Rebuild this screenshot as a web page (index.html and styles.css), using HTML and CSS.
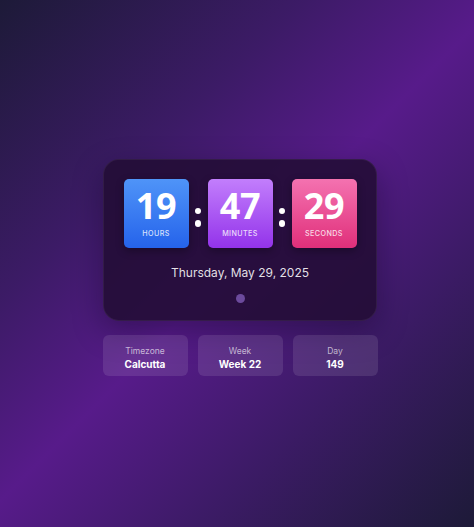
FILE: index.html
```html
<!DOCTYPE html>
<html lang="en">
<head>
<meta charset="utf-8">
<title>Clock</title>
<link rel="stylesheet" href="styles.css">
</head>
<body>
<main class="page">
  <section class="card">
    <div class="clock">
      <div class="tile tile-blue">
        <span class="num">19</span>
        <span class="unit">HOURS</span>
      </div>
      <div class="colon"><i></i><i></i></div>
      <div class="tile tile-purple">
        <span class="num">47</span>
        <span class="unit">MINUTES</span>
      </div>
      <div class="colon"><i></i><i></i></div>
      <div class="tile tile-pink">
        <span class="num">29</span>
        <span class="unit">SECONDS</span>
      </div>
    </div>
    <p class="date">Thursday, May 29, 2025</p>
    <div class="pulse"></div>
  </section>
  <section class="info">
    <div class="box"><span class="label">Timezone</span><span class="value">Calcutta</span></div>
    <div class="box"><span class="label">Week</span><span class="value">Week 22</span></div>
    <div class="box"><span class="label">Day</span><span class="value">149</span></div>
  </section>
</main>
</body>
</html>
```
FILE: styles.css
```css
html, body {
  margin: 0;
  padding: 0;
}
body {
  width: 474px;
  height: 527px;
  background: linear-gradient(135deg, #1d1a38 0%, #3c1b66 30%, #571b8a 50%, #3c1b66 72%, #1d1a38 100%);
  font-family: Inter, "Noto Sans", sans-serif;
  color: #fff;
  overflow: hidden;
}
.page {
  height: 527px;
  display: flex;
  flex-direction: column;
  align-items: center;
  padding: 159px 0 0 6px;
  box-sizing: border-box;
}
.card {
  width: 274px;
  height: 162px;
  box-sizing: border-box;
  padding: 19px 20px 0 20px;
  background: rgba(34, 12, 52, 0.88);
  border: 1px solid rgba(255, 255, 255, 0.06);
  border-radius: 16px;
  display: flex;
  flex-direction: column;
  align-items: center;
  box-shadow: 0 10px 30px rgba(10, 0, 25, 0.35);
}
.clock {
  display: flex;
  align-items: flex-start;
}
.tile {
  width: 65px;
  height: 69px;
  border-radius: 5px;
  display: flex;
  flex-direction: column;
  align-items: center;
  box-sizing: border-box;
  padding-top: 9px;
  box-shadow: 0 3px 8px rgba(0, 0, 0, 0.3);
}
.tile-blue { background: linear-gradient(180deg, #4f94f8 0%, #2563eb 100%); }
.tile-purple { background: linear-gradient(180deg, #c27efc 0%, #9333ea 100%); }
.tile-pink { background: linear-gradient(180deg, #f472b0 0%, #e02f7a 100%); }
.num {
  font-family: "Noto Sans", sans-serif;
  font-weight: 700;
  font-size: 36px;
  line-height: 36px;
  letter-spacing: -0.3px;
}
.unit {
  font-size: 7.2px;
  line-height: 9px;
  letter-spacing: 0.4px;
  margin-top: 5px;
  color: rgba(255, 255, 255, 0.82);
  font-weight: 500;
}
.colon {
  width: 19px;
  height: 69px;
  display: flex;
  flex-direction: column;
  align-items: center;
  justify-content: center;
  gap: 6px;
  padding-top: 7px;
  box-sizing: border-box;
}
.colon i {
  width: 6.5px;
  height: 6.5px;
  border-radius: 50%;
  background: #fff;
}
.date {
  margin: 17px 0 0 0;
  font-size: 12px;
  line-height: 16px;
  font-weight: 400;
  color: rgba(255, 255, 255, 0.88);
}
.pulse {
  margin-top: 13px;
  width: 9px;
  height: 9px;
  border-radius: 50%;
  background: #6c4a9c;
}
.info {
  margin-top: 14px;
  display: flex;
  gap: 10px;
}
.box {
  width: 85px;
  height: 41px;
  border-radius: 6px;
  background: rgba(255, 255, 255, 0.1);
  display: flex;
  flex-direction: column;
  align-items: center;
  box-sizing: border-box;
  padding-top: 11px;
}
.label {
  font-size: 8.5px;
  line-height: 11px;
  color: rgba(255, 255, 255, 0.65);
}
.value {
  font-size: 10px;
  line-height: 13px;
  font-weight: 700;
  margin-top: 1px;
}
```
